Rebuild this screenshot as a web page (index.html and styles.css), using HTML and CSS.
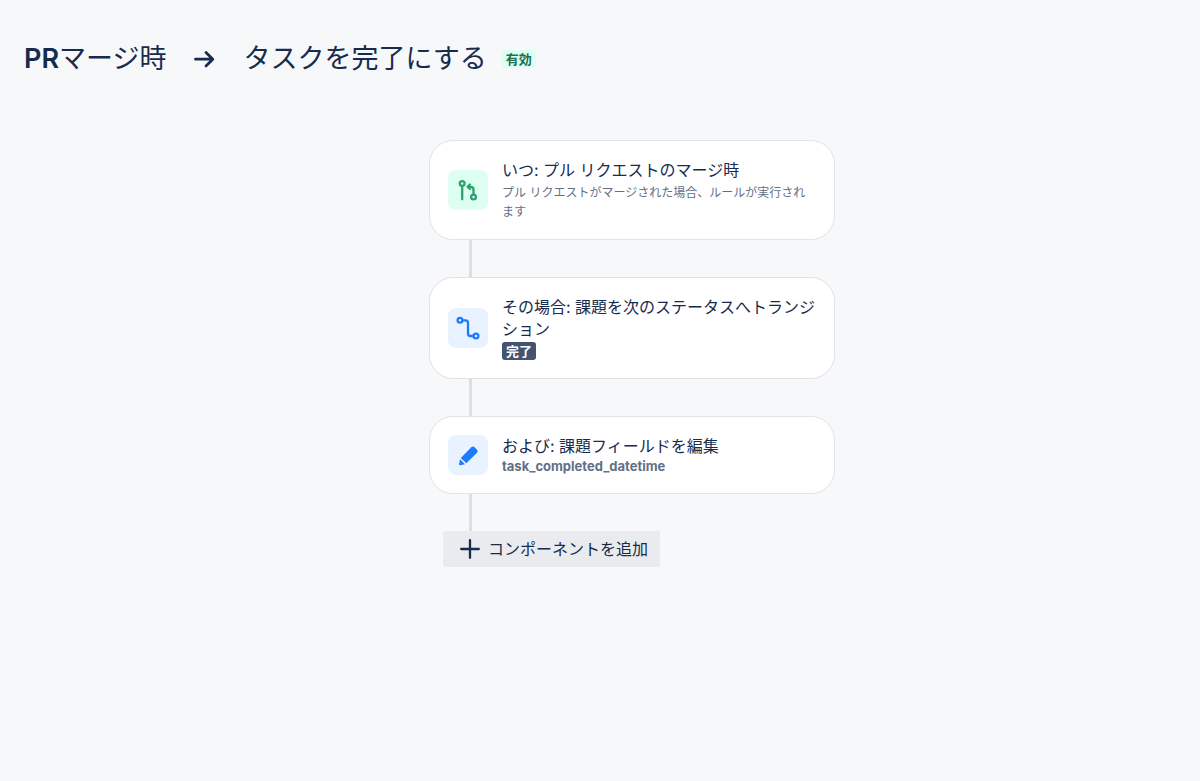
FILE: index.html
```
<!DOCTYPE html>
<html lang="ja">
<head>
    <meta charset="UTF-8">
    <meta name="viewport" content="width=device-width, initial-scale=1.0">
    <title>PRマージ時 → タスクを完了にする</title>
    <link rel="stylesheet" href="styles.css">
</head>
<body>
    <header class="rule-header">
        <h1 class="rule-name"><span class="latin">PR</span>マージ時　<svg class="arrow" viewBox="3 0 23 27" stroke-width="2.8" role="img" aria-label="→"><path d="M4.500 13.200H21.500M15 6.500L21.800 13.200L15 20"/></svg>　タスクを完了にする</h1>
        <span class="lozenge lozenge-success">有効</span>
    </header>
    <main class="rule-chain">
        <ol class="steps">
            <li class="step">
                <div class="card">
                    <span class="card-icon icon-trigger">
                        <svg viewBox="0 0 40 40" stroke-width="2.3" aria-hidden="true">
                            <circle cx="14.200" cy="13.500" r="2.400"/>
                            <path d="M14.200 16V29.300"/>
                            <circle cx="25.500" cy="27" r="2.400"/>
                            <path d="M25.500 24.500V19.500Q25.500 16.800 22.800 16.800H20"/>
                            <path d="M22 14.500L19.600 16.800L22 19"/>
                        </svg>
                    </span>
                    <div class="card-text">
                        <h2 class="card-title">いつ: プル リクエストのマージ時</h2>
                        <p class="card-desc">プル リクエストがマージされた場合、ルールが実行されます</p>
                    </div>
                </div>
            </li>
            <li class="step">
                <div class="card">
                    <span class="card-icon icon-action">
                        <svg viewBox="0 0 40 40" stroke-width="2.3" aria-hidden="true">
                            <circle cx="12" cy="12.300" r="2.400"/>
                            <path d="M14.500 12.300H17.500Q20 12.300 20 15V25.500Q20 28 22.500 28H25.500"/>
                            <circle cx="28" cy="28" r="2.400"/>
                        </svg>
                    </span>
                    <div class="card-text">
                        <h2 class="card-title">その場合: 課題を次のステータスへトランジション</h2>
                        <span class="lozenge lozenge-dark">完了</span>
                    </div>
                </div>
            </li>
            <li class="step">
                <div class="card">
                    <span class="card-icon icon-action">
                        <svg viewBox="0 0 40 40" aria-hidden="true">
                            <path class="solid" d="M12.800 23L23.300 12.300Q24.800 10.800 26.300 12.100L29 14.700Q30.400 16.200 29 17.700L18.300 28.300Z"/>
                            <path class="solid" d="M12 24.200L17 29.200L12.200 30.200Q11 30.300 11.100 29.200Z"/>
                        </svg>
                    </span>
                    <div class="card-text">
                        <h2 class="card-title">および: 課題フィールドを編集</h2>
                        <p class="card-field">task_completed_datetime</p>
                    </div>
                </div>
            </li>
        </ol>
        <button type="button" class="add-button">
            <svg viewBox="0 0 20 20" stroke-width="2.3" aria-hidden="true"><path d="M10 1.200V18.800M1.200 10H18.800"/></svg>
            <span>コンポーネントを追加</span>
        </button>
    </main>
</body>
</html>
```
FILE: styles.css
```
* {
    box-sizing: border-box;
}
body {
    margin: 0;
    font-family: Inter, "Noto Sans CJK JP", sans-serif;
    background-color: #f7f8fa;
    color: #172b4d;
}
h1, h2, p, ol {
    margin: 0;
    padding: 0;
}
svg {
    fill: none;
    stroke: currentColor;
    stroke-linecap: round;
    stroke-linejoin: round;
}
.rule-header {
    display: flex;
    align-items: center;
    gap: 15px;
    padding: 41px 24px 0;
}
.rule-name {
    font-size: 27px;
    font-weight: 400;
    line-height: 36px;
}
.latin {
    font-weight: 600;
}
.arrow {
    width: 23px;
    height: 27px;
    vertical-align: -5px;
}
.lozenge {
    display: block;
    width: fit-content;
    padding: 0 4px;
    border-radius: 3px;
    font-size: 13px;
    font-weight: 700;
    line-height: 18px;
}
.lozenge-success {
    background-color: #dcfff1;
    color: #216e4e;
}
.lozenge-dark {
    margin-top: 2px;
    background-color: #44546f;
    color: #ffffff;
}
.rule-chain {
    max-width: 470px;
    margin: 0 auto;
    padding: 63px 0 24px 64px;
}
.steps {
    list-style: none;
}
/* line that leads down to the next component */
.step::after {
    content: "";
    display: block;
    width: 3px;
    height: 37px;
    margin-left: 40px;
    background-color: #dcdfe4;
}
.card {
    display: flex;
    align-items: center;
    gap: 14px;
    padding: 18px;
    border: 1px solid #e1e3e8;
    border-radius: 24px;
    background-color: #ffffff;
}
.card-icon {
    flex: none;
    width: 40px;
    height: 40px;
    border-radius: 8px;
}
.card-icon svg {
    display: block;
}
.icon-trigger {
    background-color: #dcfff1;
    color: #2da36c;
}
.icon-action {
    background-color: #e9f2ff;
    color: #1d7afc;
}
.solid {
    fill: currentColor;
    stroke: none;
}
.card-text {
    flex: 1;
}
.card-title {
    font-size: 16px;
    font-weight: 400;
    line-height: 22px;
}
.card-desc {
    margin-top: 2px;
    color: #626f86;
    font-size: 12px;
    line-height: 19px;
}
.card-field {
    color: #626f86;
    font-size: 13px;
    font-weight: 700;
    line-height: 18px;
}
.add-button {
    display: flex;
    align-items: center;
    gap: 8px;
    height: 36px;
    margin-left: 14px;
    padding: 0 12px 0 17px;
    border: 0;
    border-radius: 3px;
    background-color: #e9ebee;
    color: #172b4d;
    font-family: inherit;
    font-size: 16px;
    line-height: 22px;
    cursor: pointer;
}
.add-button svg {
    width: 20px;
    height: 20px;
}
```
